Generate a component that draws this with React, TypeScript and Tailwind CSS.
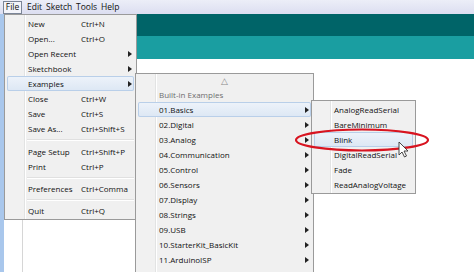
import React from 'react';

type Item = { label: string; shortcut?: string; arrow?: boolean; active?: boolean } | { sep: number };

const fileMenu: Item[] = [
  { label: 'New', shortcut: 'Ctrl+N' },
  { label: 'Open...', shortcut: 'Ctrl+O' },
  { label: 'Open Recent', arrow: true },
  { label: 'Sketchbook', arrow: true },
  { label: 'Examples', arrow: true, active: true },
  { label: 'Close', shortcut: 'Ctrl+W' },
  { label: 'Save', shortcut: 'Ctrl+S' },
  { label: 'Save As...', shortcut: 'Ctrl+Shift+S' },
  { sep: 8 },
  { label: 'Page Setup', shortcut: 'Ctrl+Shift+P' },
  { label: 'Print', shortcut: 'Ctrl+P' },
  { sep: 7 },
  { label: 'Preferences', shortcut: 'Ctrl+Comma' },
  { sep: 7 },
  { label: 'Quit', shortcut: 'Ctrl+Q' },
];

const examples = [
  '01.Basics',
  '02.Digital',
  '03.Analog',
  '04.Communication',
  '05.Control',
  '06.Sensors',
  '07.Display',
  '08.Strings',
  '09.USB',
  '10.StarterKit_BasicKit',
  '11.ArduinoISP',
];

const basics = ['AnalogReadSerial', 'BareMinimum', 'Blink', 'DigitalReadSerial', 'Fade', 'ReadAnalogVoltage'];

const font = { fontFamily: '"Open Sans", "Noto Sans", sans-serif' };

const Arrow = () => (
  <span className="ml-auto mr-[2px] w-0 h-0 border-y-[3px] border-y-transparent border-l-[4px] border-l-[#222]" />
);

const activeRow =
  'bg-[linear-gradient(to_bottom,#eef3fa,#dce7f4)] shadow-[inset_0_0_0_1px_#b9cfe9] rounded-[2px]';

export default function App() {
  return (
    <div className="relative w-[474px] h-[272px] overflow-hidden bg-white text-[#111]" style={font}>
      {/* menu bar */}
      <div className="h-[14px] flex items-center text-[8.5px] bg-[linear-gradient(to_bottom,#eceef8,#dcdef1)]">
        <span className="ml-[3px] h-[13px] w-[19px] flex items-center justify-center border border-[#7b8597] bg-[#f3f4fa]">
          File
        </span>
        <span className="ml-[5px] w-[19px]">Edit</span>
        <span className="w-[30px]">Sketch</span>
        <span className="w-[25px]">Tools</span>
        <span>Help</span>
      </div>

      {/* window body */}
      <div className="flex h-[258px]">
        <div className="w-[4px] bg-[#a9c7ec]" />
        <div className="flex-1 flex flex-col">
          <div className="h-[22px] bg-[#006468]" />
          <div className="h-[23px] bg-[#1a9ea1]" />
          <div className="flex-1 flex">
            <div className="w-[19px] border-r border-[#d6d6d6]" />
            <div className="flex-1" />
          </div>
        </div>
      </div>

      {/* File menu */}
      <div className="absolute left-[4px] top-[14px] w-[133px] border border-[#9a9a9a] pt-[1px] pb-[1px] text-[8px] bg-[linear-gradient(to_right,#f1f1f1_19px,#e2e3e3_19px,#e2e3e3_20px,#ffffff_20px,#ffffff_21px,#f0f0f0_21px)]">
        {fileMenu.map((it, i) =>
          'sep' in it ? (
            <div key={i} className="flex items-center" style={{ height: it.sep }}>
              <div className="ml-[22px] mr-[2px] flex-1 border-t border-[#e0e0e0] border-b border-b-white" />
            </div>
          ) : (
            <div key={i} className={`h-[15px] mx-[2px] pl-[21px] flex items-center ${it.active ? activeRow : ''}`}>
              <span className="w-[53px] whitespace-nowrap">{it.label}</span>
              {it.shortcut && <span className="whitespace-nowrap">{it.shortcut}</span>}
              {it.arrow && <Arrow />}
            </div>
          )
        )}
      </div>

      {/* Examples submenu */}
      <div className="absolute left-[135px] top-[73px] w-[179px] h-[210px] border border-[#9a9a9a] text-[8px] bg-[linear-gradient(to_right,#f1f1f1_19px,#e2e3e3_19px,#e2e3e3_20px,#ffffff_20px,#ffffff_21px,#f0f0f0_21px)]">
        <div className="h-[13px] flex items-center justify-center text-[#8a8a8a] text-[9px]">△</div>
        <div className="h-[15px] mx-[2px] pl-[21px] flex items-center text-[#6e6e6e]">Built-in Examples</div>
        {examples.map((e, i) => (
          <div key={e} className={`h-[15px] mx-[2px] pl-[21px] flex items-center ${i === 0 ? activeRow : ''}`}>
            <span className="whitespace-nowrap">{e}</span>
            <Arrow />
          </div>
        ))}
      </div>

      {/* 01.Basics submenu */}
      <div className="absolute left-[311px] top-[100px] w-[105px] h-[94px] border border-[#9a9a9a] pt-[1px] text-[8px] bg-[linear-gradient(to_right,#f1f1f1_18px,#e2e3e3_18px,#e2e3e3_19px,#ffffff_19px,#ffffff_20px,#f0f0f0_20px)]">
        {basics.map((b) => (
          <div key={b} className={`h-[15px] mx-[2px] pl-[20px] flex items-center ${b === 'Blink' ? activeRow : ''}`}>
            <span className="whitespace-nowrap">{b}</span>
          </div>
        ))}
      </div>

      {/* red marker */}
      <svg className="absolute left-[294px] top-[127px]" width="138" height="26" viewBox="0 0 138 26">
        <ellipse cx="68" cy="13" rx="66" ry="10.5" fill="none" stroke="#d81420" strokeWidth="2.2" />
      </svg>

      {/* mouse cursor */}
      <svg className="absolute left-[398px] top-[141px]" width="12" height="18" viewBox="0 0 12 18">
        <path d="M1 1 L1 14 L4 11 L6.5 16 L8.5 15 L6 10 L10 10 Z" fill="#fff" stroke="#333" strokeWidth="0.9" strokeLinejoin="round" />
      </svg>
    </div>
  );
}
